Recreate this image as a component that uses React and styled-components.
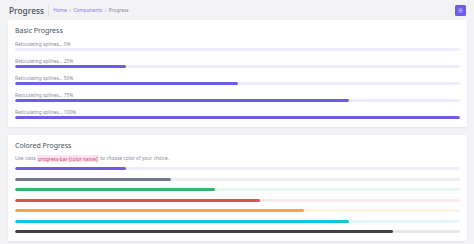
import React from 'react';
import styled, { createGlobalStyle } from 'styled-components';

const GlobalStyle = createGlobalStyle`
  body {
    margin: 0;
    background: #f3f3f6;
    font-family: "Noto Sans", "Open Sans", sans-serif;
  }
`

const Page = styled.div`
  padding: 0 7px 0 8px;
`

const Header = styled.div`
  height: 20px;
  display: flex;
  align-items: center;
  justify-content: space-between;
  padding-left: 1px;
`

const TitleGroup = styled.div`
  display: flex;
  align-items: center;
`

const PageTitle = styled.h4`
  margin: 0;
  font-size: 8.4px;
  line-height: 11px;
  font-weight: 500;
  color: #495057;
  padding-right: 4px;
  border-right: 1px solid #e2e2e8;
  margin-right: 4px;
`

const Crumbs = styled.div`
  display: flex;
  align-items: center;
  gap: 2.5px;
  font-size: 4.8px;
  color: #878a99;
`

const Crumb = styled.span`
  color: ${p => (p.active ? '#878a99' : '#8377f0')};
`

const MenuButton = styled.button`
  width: 11px;
  height: 11px;
  padding: 0;
  border: none;
  border-radius: 1.5px;
  background: #6c5ce7;
  display: flex;
  align-items: center;
  justify-content: center;
  margin-right: 1px;
`

const Card = styled.div`
  background: #fff;
  border-radius: 2px;
  box-shadow: 0 1px 2px rgba(56, 65, 74, 0.08);
  padding: 6px 7px 8px;
  margin-bottom: 8px;
`

const CardTitle = styled.h5`
  margin: 0 0 6px;
  font-size: 7px;
  line-height: 9px;
  font-weight: 400;
  color: #495057;
`

const Item = styled.div`
  margin-bottom: 7px;
  &:last-child {
    margin-bottom: 0;
  }
`

const Label = styled.div`
  font-size: 4.8px;
  line-height: 6px;
  color: #878a99;
  margin-bottom: 1px;
`

const Track = styled.div`
  height: 3px;
  border-radius: 2px;
  background: ${p => p.track};
  overflow: hidden;
  margin-bottom: ${p => p.gap || 0}px;
  &:last-child {
    margin-bottom: 0;
  }
`

const Fill = styled.div`
  height: 100%;
  border-radius: 2px;
  background: ${p => p.color};
`

const Desc = styled.p`
  margin: -1px 0 5px;
  font-size: 4.8px;
  line-height: 7px;
  color: #878a99;
`

const Code = styled.code`
  font-family: inherit;
  background: #fbe6f0;
  color: #d63384;
  padding: 0.5px 1.5px;
  border-radius: 1px;
`

const basic = [0, 25, 50, 75, 100];

const colored = [
  { value: 25, color: '#6c5ce7', track: '#efedfc' },
  { value: 35, color: '#74788d', track: '#eeeef0' },
  { value: 45, color: '#2bb96a', track: '#e7f6ee' },
  { value: 55, color: '#e05252', track: '#fceaea' },
  { value: 65, color: '#f7a14a', track: '#fef2e7' },
  { value: 75, color: '#12c6e2', track: '#e4f7fb' },
  { value: 85, color: '#3f4347', track: '#e8e8e9' },
];

export default function App() {
  return (
    <Page>
      <GlobalStyle />
      <Header>
        <TitleGroup>
          <PageTitle>Progress</PageTitle>
          <Crumbs>
            <Crumb>Home</Crumb>
            <span>›</span>
            <Crumb>Components</Crumb>
            <span>›</span>
            <Crumb active>Progress</Crumb>
          </Crumbs>
        </TitleGroup>
        <MenuButton>
          <svg width="5" height="5" viewBox="0 0 10 10">
            <path d="M1 2h8M1 5h8M1 8h8" stroke="#c9c3fa" strokeWidth="1.6" />
          </svg>
        </MenuButton>
      </Header>

      <Card>
        <CardTitle>Basic Progress</CardTitle>
        {basic.map(v => (
          <Item key={v}>
            <Label>Reticulating splines... {v}%</Label>
            <Track track="#efedfc">
              <Fill color="#6c5ce7" style={{ width: `${v}%` }} />
            </Track>
          </Item>
        ))}
      </Card>

      <Card>
        <CardTitle>Colored Progress</CardTitle>
        <Desc>
          Use class <Code>progress-bar-[color name]</Code> to choose color of your choice.
        </Desc>
        {colored.map(c => (
          <Track key={c.color} track={c.track} gap={7.5}>
            <Fill color={c.color} style={{ width: `${c.value}%` }} />
          </Track>
        ))}
      </Card>
    </Page>
  );
}
